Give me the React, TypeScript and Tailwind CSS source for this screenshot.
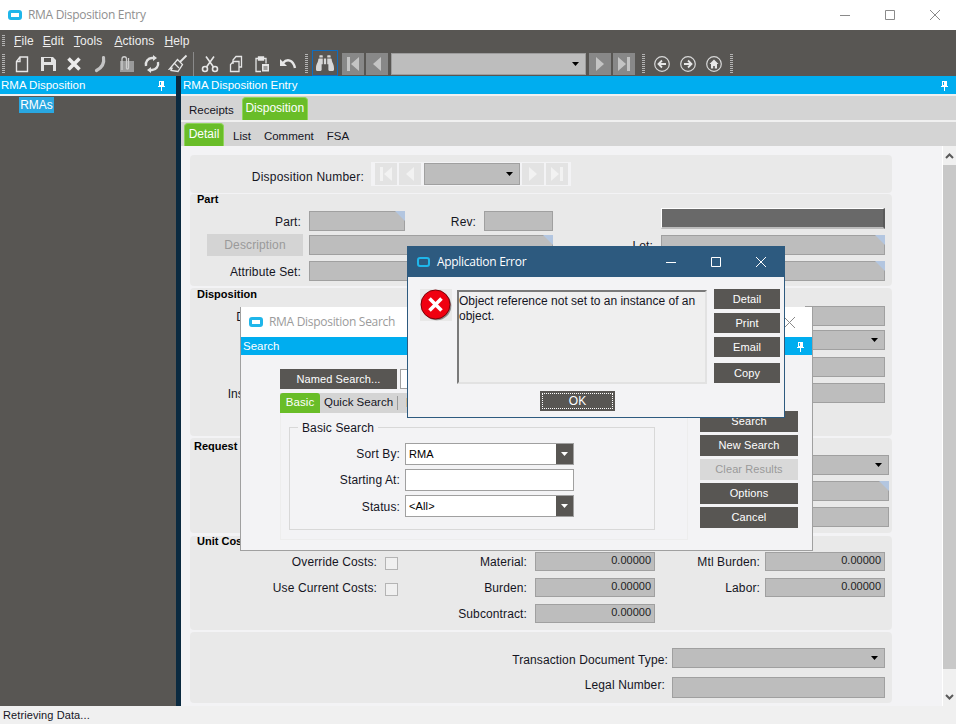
import React from "react";
import { twMerge } from "tailwind-merge";
import { FaBinoculars } from "react-icons/fa";

const fontStack = "[font-family:'Liberation_Sans',Arial,sans-serif]";

const Grip = ({ className }: { className?: string }) => (
  <div
    className={twMerge(
      "w-[3px] shrink-0 bg-[repeating-linear-gradient(to_bottom,#b4b4b4_0_1px,transparent_1px_2px)]",
      className,
    )}
  />
);

const AppIcon = ({ className }: { className?: string }) => (
  <div className={twMerge("h-[10px] w-[14px] shrink-0 rounded-[3px] border-[3px] border-[#1fb6ea]", className)} />
);

const Pin = ({ className }: { className?: string }) => (
  <svg width="9" height="10" viewBox="0 0 9 10" className={twMerge("shrink-0", className)}>
    <path d="M2 0h5v5H2z M1 5h7v1H1z M4 6h1v4H4z M3 1v3h1V1z" fill="#fff" fillRule="evenodd" />
  </svg>
);

const WindowButtons = ({ color, className }: { color: string; className?: string }) => (
  <div className={twMerge("ml-auto flex items-center gap-[35px]", className)}>
    <svg width="10" height="10" viewBox="0 0 10 10">
      <path d="M0 5.5h10" stroke={color} />
    </svg>
    <svg width="10" height="10" viewBox="0 0 10 10">
      <path d="M.5.5h9v9h-9z" stroke={color} fill="none" />
    </svg>
    <svg width="10" height="10" viewBox="0 0 10 10">
      <path d="M0 0l10 10M10 0L0 10" stroke={color} />
    </svg>
  </div>
);

const Arrow = () => (
  <svg width="7" height="4" viewBox="0 0 7 4">
    <path d="M0 0h7L3.5 4z" fill="currentColor" />
  </svg>
);

const Field = ({
  className,
  value,
  corner,
  arrow,
}: {
  className?: string;
  value?: string;
  corner?: boolean;
  arrow?: boolean;
}) => (
  <div
    className={twMerge(
      "relative flex h-[20px] shrink-0 items-center justify-end border border-[#a0a0a0] bg-[#bdbdbd] pr-[3px] text-[11px] tracking-normal text-[#222]",
      value ? "pb-[2px]" : "",
      className,
    )}
  >
    {value}
    {arrow && (
      <span className="mr-[3px] flex text-black">
        <Arrow />
      </span>
    )}
    {corner && (
      <div className="absolute -top-px -right-px h-[10px] w-[10px] bg-[#b3c6e0] [clip-path:polygon(0_0,100%_0,100%_100%)]" />
    )}
  </div>
);

const Label = ({ className, children }: { className?: string; children: React.ReactNode }) => (
  <span className={twMerge("shrink-0 pt-[2px] text-right whitespace-nowrap text-[#15151f]", className)}>{children}</span>
);

const Heading = ({ className, children }: { className?: string; children: React.ReactNode }) => (
  <div className={twMerge("pl-[7px] text-[11px] font-bold tracking-normal whitespace-nowrap text-black", className)}>
    {children}
  </div>
);

const Panel = ({ className, children }: { className?: string; children: React.ReactNode }) => (
  <div className={twMerge("w-[702px] shrink-0 rounded-[4px] bg-[#e9e9e9] text-[12px] tracking-[0.12px]", className)}>
    {children}
  </div>
);

const ToolIcon = ({ children, className }: { children: React.ReactNode; className?: string }) => (
  <div className={twMerge("flex h-[24px] w-[26px] shrink-0 items-center justify-center", className)}>{children}</div>
);

const First = ({ color }: { color: string }) => (
  <svg width="12" height="14" viewBox="0 0 12 14">
    <path d="M0 0h3v14H0zM12 0v14L4 7z" fill={color} />
  </svg>
);
const Prev = ({ color }: { color: string }) => (
  <svg width="8" height="14" viewBox="0 0 8 14">
    <path d="M8 0v14L0 7z" fill={color} />
  </svg>
);
const Next = ({ color }: { color: string }) => (
  <svg width="8" height="14" viewBox="0 0 8 14">
    <path d="M0 0v14l8-7z" fill={color} />
  </svg>
);
const Last = ({ color }: { color: string }) => (
  <svg width="12" height="14" viewBox="0 0 12 14">
    <path d="M12 0H9v14h3zM0 0v14l8-7z" fill={color} />
  </svg>
);

const NavButton = ({ children, className }: { children: React.ReactNode; className?: string }) => (
  <div className={twMerge("flex h-[22px] w-[22px] shrink-0 items-center justify-center", className)}>{children}</div>
);

const CircleIcon = ({ children }: { children: React.ReactNode }) => (
  <svg width="16" height="16" viewBox="0 0 16 16" className="shrink-0">
    <circle cx="8" cy="8" r="7.3" fill="none" stroke="#d8d8d8" strokeWidth="1.2" />
    {children}
  </svg>
);

const DarkButton = ({ children, className }: { children: React.ReactNode; className?: string }) => (
  <div
    className={twMerge(
      "flex h-[20px] shrink-0 items-center justify-center bg-[#585653] text-[11px] tracking-[0.1px] text-white",
      className,
    )}
  >
    {children}
  </div>
);

const Combo = ({ value, arrow }: { value?: string; arrow?: boolean }) => (
  <div className="flex h-[22px] w-[169px] shrink-0 items-center border border-[#a0a0a0] bg-white pl-[3px] text-[11px] text-black">
    {value}
    {arrow && (
      <span className="ml-auto flex h-full w-[17px] items-center justify-center bg-[#585653] text-white">
        <Arrow />
      </span>
    )}
  </div>
);

const MenuItem = ({ first, rest, className }: { first: string; rest: string; className?: string }) => (
  <span className={twMerge("text-[12px] tracking-[0.1px] text-[#eeeeee]", className)}>
    <span className="underline">{first}</span>
    {rest}
  </span>
);

const SearchWindow = () => (
  <div className="absolute top-[307px] left-[240px] flex h-[244px] w-[573px] flex-col border border-t-0 border-[#a0a0a0] bg-[#f3f3f5] text-[12px] tracking-[0.12px]">
    <div className="flex h-[30px] shrink-0 items-center bg-white pl-[8px]">
      <AppIcon />
      <span className="ml-[6px] font-['Open_Sans',sans-serif] text-[12px] tracking-[-0.3px] text-[#9b9b9b]">
        RMA Disposition Search
      </span>
      <svg width="11" height="11" viewBox="0 0 11 11" className="mr-[17px] ml-auto">
        <path d="M0 0l11 11M11 0L0 11" stroke="#8a8a8a" />
      </svg>
    </div>
    <div className="flex h-[18px] shrink-0 items-center bg-[#00adef] pt-px pr-[7px] pl-[2px] text-[11.5px] tracking-normal text-white">
      Search
      <Pin className="ml-auto" />
    </div>
    <div className="flex flex-1">
      <div className="ml-[39px] flex w-[408px] shrink-0 flex-col pt-[14px]">
        <div className="flex">
          <DarkButton className="w-[117px]">Named Search...</DarkButton>
          <div className="ml-[3px] h-[20px] w-[200px] border border-[#a0a0a0] bg-white" />
        </div>
        <div className="mt-[4px] flex h-[20px] shrink-0 items-center bg-[#d4d4d4] text-[#15151f]">
          <div className="flex h-full w-[40px] items-center justify-center rounded-t-[3px] bg-[#69bd28] text-[11.5px] text-white">
            Basic
          </div>
          <span className="ml-[4px] text-[11.5px] tracking-normal whitespace-nowrap">Quick Search</span>
          <div className="ml-[4px] h-[14px] w-px bg-[#999]" />
          <span className="ml-[8px]">Extended</span>
        </div>
        <div className="h-[127px] border border-t-0 border-[#ededed] pt-[14px] pl-[8px]">
          <div className="relative flex h-[103px] w-[366px] flex-col gap-[4px] border border-[#d8d8d8] pt-[15px]">
            <span className="absolute -top-[9px] left-[8px] bg-[#f3f3f5] px-[4px] text-[#15151f]">Basic Search</span>
            <div className="flex items-center">
              <Label className="w-[110px] pt-0">Sort By:</Label>
              <div className="ml-[5px]">
                <Combo value="RMA" arrow />
              </div>
            </div>
            <div className="flex items-center">
              <Label className="w-[110px] pt-0">Starting At:</Label>
              <div className="ml-[5px]">
                <Combo />
              </div>
            </div>
            <div className="flex items-center">
              <Label className="w-[110px] pt-[2px]">Status:</Label>
              <div className="ml-[5px]">
                <Combo value="<All>" arrow />
              </div>
            </div>
          </div>
        </div>
      </div>
      <div className="ml-[12px] flex w-[98px] flex-col gap-[3px] pt-[56px]">
        <DarkButton className="h-[21px]">Search</DarkButton>
        <DarkButton className="h-[21px]">New Search</DarkButton>
        <DarkButton className="h-[21px] bg-[#d9d9d9] text-[#9a9a9a]">Clear Results</DarkButton>
        <DarkButton className="h-[21px]">Options</DarkButton>
        <DarkButton className="h-[21px]">Cancel</DarkButton>
      </div>
    </div>
  </div>
);

const ErrorWindow = () => (
  <div className="absolute top-[246px] left-[407px] flex h-[172px] w-[378px] flex-col border border-[#2d5a7f] bg-[#f3f3f5]">
    <div className="flex h-[30px] shrink-0 items-center bg-[#2d5a7f] pl-[9px]">
      <div className="h-[10px] w-[13px] shrink-0 rounded-[3px] border-[2px] border-[#1fb6ea]" />
      <span className="ml-[7px] font-['Open_Sans',sans-serif] text-[12px] tracking-[-0.3px] text-white">
        Application Error
      </span>
      <WindowButtons color="#ffffff" className="mr-[18px]" />
    </div>
    <div className="flex pt-[12px] pl-[12px]">
      <div className="flex h-[32px] w-[32px] shrink-0 bg-[#e8e8e8]">
        <svg width="32" height="32" viewBox="0 0 32 32">
          <circle cx="16.8" cy="16.8" r="14.5" fill="#8c8c8c" />
          <circle cx="15.5" cy="15.5" r="14.5" fill="#f00010" stroke="#7a0008" strokeWidth="1" />
          <path d="M9.5 9.5l12 12M21.5 9.5l-12 12" stroke="#fff" strokeWidth="3.6" />
        </svg>
      </div>
      <div className="mt-px ml-[5px] h-[94px] w-[250px] shrink-0 border-2 border-t-[#7a7a7a] border-r-[#e2e2e2] border-b-[#e2e2e2] border-l-[#7a7a7a] bg-[#efefef] pt-[2px] text-[12px] leading-[15px] text-[#15151f]">
        Object reference not set to an instance of an object.
      </div>
      <div className="ml-[7px] flex w-[66px] shrink-0 flex-col">
        <DarkButton>Detail</DarkButton>
        <DarkButton className="mt-[4px]">Print</DarkButton>
        <DarkButton className="mt-[4px]">Email</DarkButton>
        <DarkButton className="mt-[6px]">Copy</DarkButton>
      </div>
    </div>
    <div className="mt-[7px] ml-[132px] flex h-[20px] w-[75px] items-center justify-center bg-[#585653] p-[2px]">
      <div className="flex h-full w-full items-center justify-center border border-dotted border-white text-[12px] text-white">
        OK
      </div>
    </div>
  </div>
);

const Toolbar = () => (
  <div className="flex h-[46px] shrink-0 flex-col bg-[#585653]">
    <div className="flex h-[22px] items-center">
      <Grip className="ml-[2px] h-[12px]" />
      <MenuItem first="F" rest="ile" className="ml-[9px]" />
      <MenuItem first="E" rest="dit" className="ml-[9px]" />
      <MenuItem first="T" rest="ools" className="ml-[10px]" />
      <MenuItem first="A" rest="ctions" className="ml-[12px]" />
      <MenuItem first="H" rest="elp" className="ml-[10px]" />
    </div>
    <div className="flex h-[24px] items-center">
      <Grip className="ml-[2px] h-[20px]" />
      <div className="ml-[4px] flex">
        <ToolIcon>
          <svg width="18" height="18" viewBox="0 0 18 18" fill="none" stroke="#e6e6e6" strokeWidth="1.4">
            <path d="M7 2h7.5v14.5h-11V6.5zM7 2v4.5H3.5" />
          </svg>
        </ToolIcon>
        <ToolIcon>
          <svg width="18" height="18" viewBox="0 0 18 18">
            <path d="M2 2h12l3 3v11H2zM5 3v4h7V3zM5 10v6h9v-6z" fill="#e2e2e2" fillRule="evenodd" />
          </svg>
        </ToolIcon>
        <ToolIcon>
          <svg width="16" height="16" viewBox="0 0 16 16">
            <path d="M2.5 2.5l11 11M13.5 2.5l-11 11" stroke="#ececec" strokeWidth="3.6" />
          </svg>
        </ToolIcon>
        <ToolIcon>
          <svg width="18" height="18" viewBox="0 0 18 18" fill="none" stroke="#c4c4c4" strokeWidth="3.2" strokeLinecap="round">
            <path d="M12.5 2.500c1 5.500-1.200 10-7 13" />
          </svg>
        </ToolIcon>
        <ToolIcon>
          <svg width="18" height="18" viewBox="0 0 18 18">
            <path d="M3 6h14v11H3z" fill="#9a9a9a" />
            <path d="M5 15V4a2.200 2.200 0 0 1 4.500 0v9a1 1 0 0 0 2 0V3" fill="none" stroke="#cdcdcd" strokeWidth="1.300" />
          </svg>
        </ToolIcon>
        <ToolIcon>
          <svg width="18" height="18" viewBox="0 0 18 18" fill="none" stroke="#e2e2e2" strokeWidth="2.400">
            <path d="M3 11A6.500 6.500 0 0 1 9 3h2M15 7a6.500 6.500 0 0 1-6 8H7" />
            <path d="M10 0v6l4-3zM8 12v6l-4-3z" fill="#e2e2e2" stroke="none" />
          </svg>
        </ToolIcon>
        <ToolIcon>
          <svg width="20" height="20" viewBox="0 0 20 20" fill="none" stroke="#e6e6e6" strokeWidth="1.3">
            <path d="M18.500 1.500L12 8" strokeWidth="1.800" />
            <path d="M9.500 5.500l5 5-4.500 7L3 16.500l1-2-2.500.5z" />
            <path d="M6 9l5 5" />
          </svg>
        </ToolIcon>
      </div>
      <div className="ml-[2px] h-[24px] w-px bg-[#8a8a8a]" />
      <div className="ml-[3px] flex">
        <ToolIcon>
          <svg width="18" height="18" viewBox="0 0 18 18" fill="none" stroke="#e6e6e6" strokeWidth="1.600">
            <circle cx="4" cy="14" r="2.500" />
            <circle cx="14" cy="14" r="2.500" />
            <path d="M5.500 12L13 1.500M12.500 12L5 1.500" />
          </svg>
        </ToolIcon>
        <ToolIcon>
          <svg width="18" height="18" viewBox="0 0 18 18" fill="none" stroke="#e6e6e6" strokeWidth="1.300">
            <path d="M6 9V5l3-3.500h5.500V12H12" />
            <path d="M6.500 6.500h5.500v10H3.500v-7z" />
          </svg>
        </ToolIcon>
        <ToolIcon>
          <svg width="18" height="18" viewBox="0 0 18 18" fill="none" stroke="#e6e6e6" strokeWidth="1.300">
            <path d="M8 16.500H3V3.500h10v5" />
            <path d="M5.500 5V2h5v3z" fill="#e6e6e6" />
            <path d="M9 9h7v7.500H9z" fill="#e6e6e6" stroke="none" />
            <path d="M10.500 12h4M10.500 14h4" stroke="#585653" strokeWidth="1" />
          </svg>
        </ToolIcon>
        <ToolIcon>
          <svg width="18" height="18" viewBox="0 0 18 18" fill="none" stroke="#e6e6e6" strokeWidth="2.400">
            <path d="M4 8c4-4.500 10-3.500 12 5" />
            <path d="M1 4v7h7z" fill="#e6e6e6" stroke="none" />
          </svg>
        </ToolIcon>
      </div>
      <Grip className="ml-[4px] h-[20px]" />
      <div className="ml-[4px] flex h-[26px] w-[26px] shrink-0 -translate-y-px items-center justify-center border border-[#0f6cbd]">
        <FaBinoculars className="text-[18px] text-[#d8d8d8]" />
      </div>
      <NavButton className="ml-[4px] bg-[#888888]">
        <First color="#c4c4c4" />
      </NavButton>
      <NavButton className="ml-[2px] bg-[#888888]">
        <Prev color="#c4c4c4" />
      </NavButton>
      <div className="ml-[3px] flex h-[22px] w-[195px] shrink-0 items-center justify-end border border-[#9d9d9d] bg-[#bdbdbd] pr-[6px] text-black">
        <Arrow />
      </div>
      <NavButton className="ml-[3px] bg-[#888888]">
        <Next color="#c4c4c4" />
      </NavButton>
      <NavButton className="ml-[2px] bg-[#888888]">
        <Last color="#c4c4c4" />
      </NavButton>
      <Grip className="ml-[7px] h-[20px]" />
      <div className="ml-[9px] flex items-center gap-[10px]">
        <CircleIcon>
          <path d="M12 8H5M8 4.500L4.500 8 8 11.500" fill="none" stroke="#e6e6e6" strokeWidth="1.800" />
        </CircleIcon>
        <CircleIcon>
          <path d="M4 8h7M8 4.500L11.500 8 8 11.500" fill="none" stroke="#e6e6e6" strokeWidth="1.800" />
        </CircleIcon>
        <CircleIcon>
          <path d="M8 3.500L3.500 8H5v4.500h2.200V10h1.600v2.500H11V8h1.500z" fill="#e6e6e6" />
        </CircleIcon>
      </div>
      <Grip className="ml-[8px] h-[20px]" />
    </div>
  </div>
);

const Form = () => (
  <div className="flex min-w-0 flex-1 flex-col bg-[#f3f3f5] pt-[9px] pl-[9px]">
    <Panel className="flex h-[38px] items-center">
      <Label className="w-[174px] pt-[5px] tracking-[0.22px]">Disposition Number:</Label>
      <div className="ml-[7px] flex h-[24px] w-[200px] shrink-0 items-center bg-[#f3f3f5] pl-[4px]">
        <NavButton className="bg-[#e3e3e3]">
          <First color="#f2f2f2" />
        </NavButton>
        <NavButton className="ml-[2px] bg-[#e3e3e3]">
          <Prev color="#f2f2f2" />
        </NavButton>
        <Field className="ml-[3px] h-[22px] w-[96px]" arrow />
        <NavButton className="ml-[2px] bg-[#e3e3e3]">
          <Next color="#f2f2f2" />
        </NavButton>
        <NavButton className="ml-[2px] bg-[#e3e3e3]">
          <Last color="#f2f2f2" />
        </NavButton>
      </div>
    </Panel>

    <Panel className="mt-px h-[92px]">
      <Heading className="h-[17px] leading-[10px]">Part</Heading>
      <div className="flex h-[20px] items-center">
        <Label className="w-[111px]">Part:</Label>
        <Field className="ml-[8px] w-[96px]" corner />
        <Label className="w-[71px]">Rev:</Label>
        <Field className="ml-[8px] w-[69px]" />
        <div className="-mt-[3px] mb-[2px] ml-[108px] h-[21px] w-[224px] shrink-0 border-t border-r-2 border-b-2 border-l border-t-white border-r-[#5a5a5a] border-b-[#bdbdbd] border-l-white bg-[#696969]" />
      </div>
      <div className="mt-[3px] flex items-center">
        <div className="ml-[17px] flex h-[22px] w-[96px] shrink-0 items-center justify-center bg-[#d4d4d4] text-[#9a9a9a]">
          Description
        </div>
        <Field className="ml-[6px] w-[244px]" corner />
        <Label className="w-[100px]">Lot:</Label>
        <Field className="ml-[8px] w-[224px]" corner />
      </div>
      <div className="mt-[5px] flex items-center">
        <Label className="w-[111px]">Attribute Set:</Label>
        <Field className="ml-[8px] w-[244px]" />
        <Field className="ml-[108px] w-[224px]" corner />
      </div>
    </Panel>

    <Panel className="mt-[2px] h-[148px]">
      <Heading className="h-[18px] pt-px leading-[11px]">Disposition</Heading>
      <div className="flex items-center">
        <Label className="w-[55px]">D</Label>
        <Field className="mr-[7px] ml-auto w-[80px]" />
      </div>
      <div className="mt-[4px] flex justify-end pr-[7px]">
        <Field className="w-[80px]" arrow />
      </div>
      <div className="mt-[7px] flex justify-end pr-[7px]">
        <Field className="w-[80px]" />
      </div>
      <div className="mt-[6px] flex items-center">
        <Label className="w-[54px]">Ins</Label>
        <Field className="mr-[7px] ml-auto w-[80px]" />
      </div>
    </Panel>

    <Panel className="mt-[2px] h-[95px]">
      <Heading className="h-[17px] pt-[2px] pl-[4px] leading-[12px]">Request</Heading>
      <div className="flex justify-end pr-[3px]">
        <Field className="w-[80px]" arrow />
      </div>
      <div className="mt-[6px] flex justify-end pr-[3px]">
        <Field className="w-[80px]" corner />
      </div>
      <div className="mt-[6px] flex justify-end pr-[3px]">
        <Field className="w-[80px]" />
      </div>
    </Panel>

    <Panel className="mt-[3px] h-[94px]">
      <Heading className="h-[15px] leading-[11px]">Unit Cost</Heading>
      <div className="flex items-center">
        <Label className="w-[187px]">Override Costs:</Label>
        <div className="mt-[5px] ml-[8px] h-[13px] w-[13px] shrink-0 border border-[#b4b4b4] bg-[#f0f0f0]" />
        <Label className="w-[129px]">Material:</Label>
        <Field className="ml-[8px] h-[19px] w-[120px]" value="0.00000" />
        <Label className="w-[105px]">Mtl Burden:</Label>
        <Field className="ml-[5px] h-[19px] w-[120px]" value="0.00000" />
      </div>
      <div className="mt-[6px] flex items-center">
        <Label className="w-[187px]">Use Current Costs:</Label>
        <div className="mt-[5px] ml-[8px] h-[13px] w-[13px] shrink-0 border border-[#b4b4b4] bg-[#f0f0f0]" />
        <Label className="w-[129px]">Burden:</Label>
        <Field className="ml-[8px] h-[19px] w-[120px]" value="0.00000" />
        <Label className="w-[105px]">Labor:</Label>
        <Field className="ml-[5px] h-[19px] w-[120px]" value="0.00000" />
      </div>
      <div className="mt-[7px] flex items-center">
        <Label className="w-[337px] pt-0">Subcontract:</Label>
        <Field className="ml-[8px] h-[19px] w-[120px]" value="0.00000" />
      </div>
    </Panel>

    <Panel className="mt-[2px] h-[71px] pt-[15px]">
      <div className="flex items-center">
        <Label className="w-[478px] pt-[4px]">Transaction Document Type:</Label>
        <Field className="ml-[4px] w-[213px]" arrow />
      </div>
      <div className="mt-[8px] flex items-center">
        <Label className="w-[475px] -translate-y-[3px] pt-0">Legal Number:</Label>
        <Field className="ml-[7px] h-[21px] w-[213px]" />
      </div>
    </Panel>
  </div>
);

const Scrollbar = () => (
  <div className="flex w-[14px] shrink-0 flex-col border-l border-white bg-[#f0f0f0]">
    <div className="flex h-[19px] items-center justify-center">
      <svg width="9" height="6" viewBox="0 0 9 6">
        <path d="M1 5l3.500-3.500L8 5" fill="none" stroke="#5a5a5a" strokeWidth="2" />
      </svg>
    </div>
    <div className="h-[504px] bg-[#c8c8c8]" />
    <div className="mt-auto flex h-[19px] items-center justify-center">
      <svg width="9" height="6" viewBox="0 0 9 6">
        <path d="M1 1l3.500 3.500L8 1" fill="none" stroke="#5a5a5a" strokeWidth="2" />
      </svg>
    </div>
  </div>
);

export default function App() {
  return (
    <div className={twMerge("relative flex h-[724px] w-[956px] flex-col overflow-hidden bg-white", fontStack)}>
      <div className="flex h-[30px] shrink-0 items-center bg-white pl-[8px]">
        <AppIcon />
        <span className="ml-[6px] font-['Open_Sans',sans-serif] text-[12px] tracking-[-0.3px] text-[#8f8f8f]">
          RMA Disposition Entry
        </span>
        <WindowButtons color="#8a8a8a" className="mr-[16px]" />
      </div>
      <Toolbar />
      <div className="flex min-h-0 flex-1">
        <div className="flex w-[176px] shrink-0 flex-col bg-[#585653]">
          <div className="flex h-[18px] shrink-0 items-center bg-[#00adef] pt-px pr-[10px] pl-[1px] text-[11.5px] text-white">
            RMA Disposition
            <Pin className="ml-auto" />
          </div>
          <div className="h-[2px] shrink-0 bg-[#f0f0f0]" />
          <div className="mt-px ml-[19px] flex h-[16px] w-[35px] items-center justify-center bg-[#29a7e1] text-[12px] text-white">
            RMAs
          </div>
        </div>
        <div className="w-[5px] shrink-0 bg-[#0b2a40]" />
        <div className="flex min-w-0 flex-1 flex-col">
          <div className="flex h-[18px] shrink-0 items-center bg-[#00adef] pt-px pr-[7px] pl-[2px] text-[11.5px] text-white">
            RMA Disposition Entry
            <Pin className="ml-auto" />
          </div>
          <div className="h-[2px] shrink-0 bg-[#f0f0f0]" />
          <div className="flex h-[24px] shrink-0 items-end bg-[#d4d4d4] text-[11.5px] text-[#15151f]">
            <span className="mb-px ml-[8px]">Receipts</span>
            <div className="ml-[8px] flex h-[23px] w-[66px] items-center justify-center rounded-t-[4px] border border-b-0 border-[#8fd45a] bg-[#69bd28] pb-[3px] text-[12px] text-white">
              Disposition
            </div>
          </div>
          <div className="h-[2px] shrink-0 bg-[#f0f0f0]" />
          <div className="flex h-[24px] shrink-0 items-end bg-[#d4d4d4] text-[11.5px] text-[#15151f]">
            <div className="ml-[3px] flex h-[23px] w-[40px] items-center justify-center rounded-t-[4px] border border-b-0 border-[#8fd45a] bg-[#69bd28] pb-[3px] text-[12px] text-white">
              Detail
            </div>
            <span className="mb-px ml-[9px]">List</span>
            <span className="mb-px ml-[13px]">Comment</span>
            <span className="mb-px ml-[13px]">FSA</span>
          </div>
          <div className="flex min-h-0 flex-1">
            <Form />
            <Scrollbar />
          </div>
        </div>
      </div>
      <div className="flex h-[18px] shrink-0 items-center bg-[#f0f0f0] pl-[3px] text-[11px] tracking-[0.1px] text-[#15151f]">
        Retrieving Data...
      </div>
      <SearchWindow />
      <ErrorWindow />
    </div>
  );
}
